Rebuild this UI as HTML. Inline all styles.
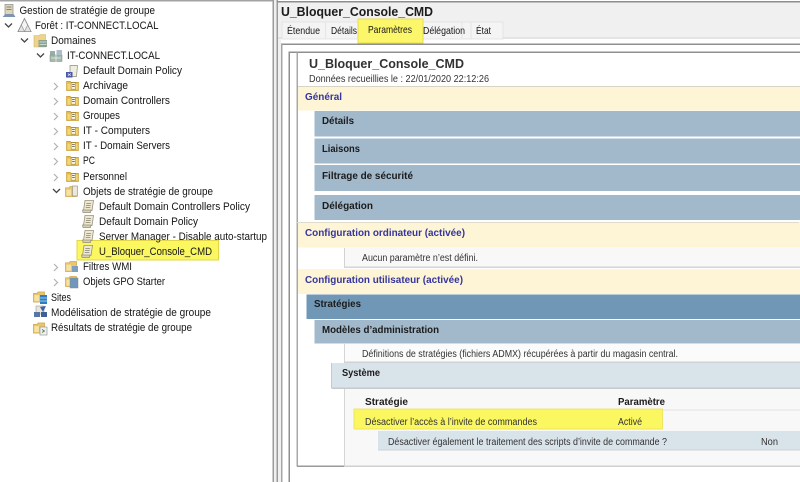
<!DOCTYPE html>
<html lang="fr"><head><meta charset="utf-8"><title>Gestion de stratégie de groupe</title>
<style>
html,body{margin:0;padding:0;background:#fff;width:800px;height:482px;overflow:hidden}
svg{display:block}
text{font-family:"Liberation Sans",sans-serif;font-size:11px;fill:#151515;white-space:pre}
.t text{filter:url(#b)}
.b{font-weight:bold;fill:#1a1a1a}
.h{font-weight:bold;fill:#35359f}
.g{fill:#333}
</style></head><body>
<svg width="800" height="482" viewBox="0 0 800 482" xmlns="http://www.w3.org/2000/svg">
<defs>
<filter id="b" x="-5%" y="-30%" width="110%" height="160%"><feGaussianBlur stdDeviation="0.25"/></filter>
<symbol id="ou" viewBox="0 0 14 12" overflow="visible"><path d="M.5 1.500h4l1 1h8v9H.5z" fill="#e6bd4c" stroke="#c59c34" stroke-width=".7"/><path d="M1.500 4h11v6.500h-11z" fill="#f3d676"/><rect x="5.500" y="3" width="5" height="7" fill="#fbf6e0" stroke="#8a7a50" stroke-width=".6"/><path d="M6.500 5h3M6.500 7h3" stroke="#5d5338" stroke-width=".8"/></symbol>
<symbol id="gpo" viewBox="0 0 12 13" overflow="visible"><path d="M3 .5h8.500L10 10.500H1.500z" fill="#efe9d4" stroke="#96907a" stroke-width=".8"/><path d="M.5 10h8.500l-.5 2.500H1z" fill="#d6cfb2" stroke="#96907a" stroke-width=".7"/><path d="M4.300 3.500h4.700M4 5.500h4.700M3.700 7.500h4.700" stroke="#85836f" stroke-width=".8"/></symbol>
<symbol id="ofold" viewBox="0 0 13 12" overflow="visible"><path d="M.5 2h4l1-1.500h7v11H.5z" fill="#e9c66b" stroke="#c9a244" stroke-width=".7"/><path d="M1.500 4h5v6.500h-5z" fill="#f6e3a4"/></symbol>
</defs>

<!-- left pane -->
<rect x="0" y="0" width="800" height="482" fill="#fff"/>
<rect x="0" y="0" width="273" height="1.500" fill="#a4a4a4"/>
<rect x="272.500" y="0" width="1.500" height="482" fill="#9b9b9b"/>
<rect x="274" y="0" width="3" height="482" fill="#f0f0f0"/>
<rect x="276.500" y="0" width="1.500" height="482" fill="#9b9b9b"/>
<rect x="278" y="2" width="522" height="480" fill="#f0f0f0"/>
<rect x="277" y="1" width="523" height="1.500" fill="#8e8e8e"/>
<rect x="278" y="37" width="522" height="2" fill="#e4e4e4"/>
<rect x="281" y="39" width="519" height="443" fill="#fff"/>
<rect x="281" y="43.500" width="519" height="1.500" fill="#8f8f8f"/>
<rect x="281" y="44" width="1.500" height="438" fill="#a5a5a5"/>
<rect x="288.500" y="51.500" width="511.500" height="1.500" fill="#8f8f8f"/>
<rect x="288.500" y="52" width="1.500" height="430" fill="#8f8f8f"/>
<rect x="296.500" y="52.500" width="1.500" height="414" fill="#a8a8a8"/>

<!-- tabs -->
<rect x="282" y="22" width="221" height="17" fill="#f4f4f4" stroke="#e0e0e0" stroke-width=".8"/>
<path d="M325.500 22v17M462 22v17M471 22v17" stroke="#e2e2e2" stroke-width=".8"/>
<rect x="358" y="19" width="65" height="24" fill="#fbf66a" stroke="#e8dc52" stroke-width="1"/>

<!-- report rows -->
<rect x="298" y="86" width="502" height="1.500" fill="#d8d4c4"/>
<rect x="298" y="87" width="502" height="23.500" fill="#fdf5d6"/>
<rect x="314.500" y="111" width="485.500" height="25.500" fill="#a2b9cc"/>
<rect x="314.500" y="138.500" width="485.500" height="25" fill="#a2b9cc"/>
<rect x="314.500" y="165" width="485.500" height="26" fill="#a2b9cc"/>
<rect x="314.500" y="195" width="485.500" height="25" fill="#a2b9cc"/>
<rect x="298" y="222.500" width="502" height="25" fill="#fdf5d6"/>
<rect x="297" y="222" width="502" height="1" fill="#e0dccb"/>
<rect x="344" y="248" width="456" height="19" fill="#f8f8f8"/>
<rect x="344" y="248" width="1" height="19" fill="#d2d2d2"/>
<rect x="344" y="266.500" width="456" height="1.500" fill="#d5d5d5"/>
<rect x="298" y="269" width="502" height="25" fill="#fdf5d6"/>
<rect x="306.500" y="294.500" width="493.500" height="24.500" fill="#7197b6"/>
<rect x="314.500" y="320" width="485.500" height="23.500" fill="#a2b9cc"/>
<rect x="344" y="344" width="456" height="18" fill="#fbfbfb"/>
<rect x="344" y="344" width="1" height="19" fill="#d5d5d5"/>
<rect x="344" y="361.500" width="456" height="1.500" fill="#cfd3d6"/>
<rect x="331.500" y="363" width="468.500" height="25.500" fill="#d9e3ea"/>
<rect x="331.500" y="387.500" width="468.500" height="1.500" fill="#c4cacd"/>
<rect x="331" y="363" width="1" height="25" fill="#c4cacd"/>
<rect x="344" y="389" width="456" height="77" fill="#f8f8f8"/>
<rect x="344" y="389" width="1" height="78" fill="#d5d5d5"/>
<rect x="355" y="409.500" width="445" height="1" fill="#e2e2e2"/>
<rect x="354" y="409" width="308.500" height="20" fill="#fbf760" stroke="#ecdf58" stroke-width=".8"/>
<rect x="378" y="431" width="422" height="19" fill="#d9e3ea"/>
<rect x="378" y="449.500" width="422" height="1" fill="#cfd3d6"/>
<rect x="297" y="465.500" width="503" height="1.500" fill="#d0d0d0"/>
<rect x="297" y="465.500" width="47" height="1.500" fill="#9a9a9a"/>

<!-- tree highlight -->
<rect x="77" y="240.500" width="141.500" height="19.500" fill="#fbf760" stroke="#e2d648" stroke-width="1"/>

<!-- expanders -->
<g fill="none" stroke="#444" stroke-width="1.300">
<path d="M5 23.500l3.500 3.500L12 23.500"/><path d="M21 38.500l3.500 3.500L28 38.500"/><path d="M37 53.500l3.500 3.500L44 53.500"/><path d="M53 189l3.500 3.500L60 189"/>
</g>
<g fill="none" stroke="#b2b2b2" stroke-width="1.200">
<path d="M54 83l3.500 3.500L54 90"/><path d="M54 98l3.500 3.500L54 105"/><path d="M54 113l3.500 3.500L54 120"/><path d="M54 128l3.500 3.500L54 135"/><path d="M54 143l3.500 3.500L54 150"/><path d="M54 158l3.500 3.500L54 165"/><path d="M54 174l3.500 3.500L54 181"/><path d="M54 264l3.500 3.500L54 271"/><path d="M54 279l3.500 3.500L54 286"/>
</g>

<!-- tree icons -->
<g>
<rect x="5" y="4.500" width="8" height="10" fill="#ddd6ba" stroke="#8a8a80" stroke-width=".7"/><path d="M2.500 17l3-3h8l2 3z" fill="#7d94b0"/><path d="M6.500 7h5M6.500 9.500h5" stroke="#667" stroke-width=".8"/>
<path d="M24.500 18.500l-6.500 13h13z" fill="#f4f4f4" stroke="#8f8f8f" stroke-width=".9"/><path d="M21.300 25l-3 6.500h6.200zM27.700 25l-3.200 6.500h6.500z" fill="#e4e4e4" stroke="#8f8f8f" stroke-width=".6"/>
<path d="M34 35.500h5l1.500-1h5v12.500H34z" fill="#eed48a" stroke="#d4b56c" stroke-width=".6"/><rect x="38.500" y="40" width="8.500" height="7" fill="#8aa391"/><path d="M39.500 42h7M39.500 44.500h7" stroke="#e3e8e3" stroke-width=".8"/>
<rect x="50" y="51" width="5" height="4" fill="#98ada5"/><rect x="50" y="55" width="12" height="6.500" fill="#a2b8ab" stroke="#7b9288" stroke-width=".5"/><rect x="56.500" y="50" width="5.500" height="5" fill="#adbdca"/><path d="M51 58h10M56 55v6.500" stroke="#edf0ed" stroke-width=".8"/>
<path d="M70 65.500h7.500l-1 11h-6.500z" fill="#efedE0" stroke="#8e8c7e" stroke-width=".7"/><rect x="66" y="72" width="6.500" height="5.500" fill="#4a5aa6"/><path d="M67.800 73.500l3 2.300M70.800 73.500l-3 2.300" stroke="#fff" stroke-width=".6"/>
<use href="#ou" x="66" y="80" width="13" height="11"/>
<use href="#ou" x="66" y="95" width="13" height="11"/>
<use href="#ou" x="66" y="110" width="13" height="11"/>
<use href="#ou" x="66" y="125" width="13" height="11"/>
<use href="#ou" x="66" y="140" width="13" height="11"/>
<use href="#ou" x="66" y="155" width="13" height="11"/>
<use href="#ou" x="66" y="171" width="13" height="11"/>
<use href="#ofold" x="65" y="186" width="12" height="11"/><rect x="72.500" y="186" width="5" height="10" fill="#ece9dc" stroke="#8b8b80" stroke-width=".6"/>
<use href="#gpo" x="82" y="200" width="12" height="13"/>
<use href="#gpo" x="82" y="215" width="12" height="13"/>
<use href="#gpo" x="82" y="230" width="12" height="13"/>
<use href="#gpo" x="81" y="245" width="12" height="13"/>
<use href="#ofold" x="65" y="261" width="12" height="11"/><rect x="72" y="266" width="6" height="6" fill="#7f9fc0"/>
<use href="#ofold" x="65" y="276" width="12" height="11"/><rect x="70" y="278" width="8" height="10" fill="#7096bd" stroke="#8b8b80" stroke-width=".5"/>
<use href="#ofold" x="33" y="291" width="12" height="12"/><rect x="40" y="295" width="7" height="9" fill="#2a7fc4"/><path d="M40 298h7M40 301h7" stroke="#cde" stroke-width=".7"/>
<rect x="36" y="306" width="8" height="8" fill="#e8e6dc" stroke="#8a8a80" stroke-width=".5"/><rect x="34" y="312" width="6" height="5" fill="#5476a8"/><rect x="41" y="312" width="6" height="5" fill="#3f5f96"/><path d="M40 307l6-1-3 6z" fill="#3a64a8"/>
<use href="#ofold" x="33" y="322" width="12" height="12"/><rect x="40" y="327" width="7" height="8" fill="#f1f1f1" stroke="#8a8a8a" stroke-width=".6"/><path d="M42 329.500l2.500 1.500-2.500 1.500" stroke="#3a7a4a" fill="none" stroke-width=".8"/>
</g>

<!-- text -->
<g class="t">
<text x="19.500" y="14" textLength="135.500" lengthAdjust="spacingAndGlyphs">Gestion de stratégie de groupe</text>
<text x="35" y="29" textLength="123.500" lengthAdjust="spacingAndGlyphs">Forêt : IT-CONNECT.LOCAL</text>
<text x="51" y="44" textLength="45" lengthAdjust="spacingAndGlyphs">Domaines</text>
<text x="67" y="59" textLength="93" lengthAdjust="spacingAndGlyphs">IT-CONNECT.LOCAL</text>
<text x="83" y="74" textLength="99" lengthAdjust="spacingAndGlyphs">Default Domain Policy</text>
<text x="83" y="89" textLength="45" lengthAdjust="spacingAndGlyphs">Archivage</text>
<text x="83" y="104" textLength="87" lengthAdjust="spacingAndGlyphs">Domain Controllers</text>
<text x="83" y="119" textLength="37" lengthAdjust="spacingAndGlyphs">Groupes</text>
<text x="83" y="134" textLength="67" lengthAdjust="spacingAndGlyphs">IT - Computers</text>
<text x="83" y="149" textLength="87" lengthAdjust="spacingAndGlyphs">IT - Domain Servers</text>
<text x="83" y="164" textLength="12" lengthAdjust="spacingAndGlyphs">PC</text>
<text x="83" y="180" textLength="44" lengthAdjust="spacingAndGlyphs">Personnel</text>
<text x="83" y="195" textLength="130" lengthAdjust="spacingAndGlyphs">Objets de stratégie de groupe</text>
<text x="99" y="210" textLength="151" lengthAdjust="spacingAndGlyphs">Default Domain Controllers Policy</text>
<text x="99" y="225" textLength="99" lengthAdjust="spacingAndGlyphs">Default Domain Policy</text>
<text x="99" y="240" textLength="168" lengthAdjust="spacingAndGlyphs">Server Manager - Disable auto-startup</text>
<text x="99" y="255" textLength="113" lengthAdjust="spacingAndGlyphs">U_Bloquer_Console_CMD</text>
<text x="83" y="270" textLength="49" lengthAdjust="spacingAndGlyphs">Filtres WMI</text>
<text x="83" y="285" textLength="82" lengthAdjust="spacingAndGlyphs">Objets GPO Starter</text>
<text x="51" y="301" textLength="20" lengthAdjust="spacingAndGlyphs">Sites</text>
<text x="51" y="316" textLength="160" lengthAdjust="spacingAndGlyphs">Modélisation de stratégie de groupe</text>
<text x="51" y="331" textLength="141" lengthAdjust="spacingAndGlyphs">Résultats de stratégie de groupe</text>

<text x="281" y="16" class="b" style="font-size:13px" textLength="152" lengthAdjust="spacingAndGlyphs">U_Bloquer_Console_CMD</text>
<text x="287" y="34" style="font-size:10.500px" textLength="33" lengthAdjust="spacingAndGlyphs">Étendue</text>
<text x="331" y="34" style="font-size:10.500px" textLength="26" lengthAdjust="spacingAndGlyphs">Détails</text>
<text x="368" y="33" style="font-size:10.500px" textLength="44" lengthAdjust="spacingAndGlyphs">Paramètres</text>
<text x="423" y="34" style="font-size:10.500px" textLength="42" lengthAdjust="spacingAndGlyphs">Délégation</text>
<text x="476" y="34" style="font-size:10.500px" textLength="15" lengthAdjust="spacingAndGlyphs">État</text>

<text x="309" y="68" class="g" style="font-size:13px;font-weight:bold" textLength="155" lengthAdjust="spacingAndGlyphs">U_Bloquer_Console_CMD</text>
<text x="309" y="82" class="g" style="font-size:10px" textLength="180" lengthAdjust="spacingAndGlyphs">Données recueillies le : 22/01/2020 22:12:26</text>
<text x="305" y="100" class="h" style="font-size:10px" textLength="37" lengthAdjust="spacingAndGlyphs">Général</text>
<text x="322" y="124" class="b" style="font-size:10px" textLength="32" lengthAdjust="spacingAndGlyphs">Détails</text>
<text x="322" y="152" class="b" style="font-size:10px" textLength="38" lengthAdjust="spacingAndGlyphs">Liaisons</text>
<text x="322" y="179" class="b" style="font-size:10px" textLength="91" lengthAdjust="spacingAndGlyphs">Filtrage de sécurité</text>
<text x="322" y="209" class="b" style="font-size:10px" textLength="51" lengthAdjust="spacingAndGlyphs">Délégation</text>
<text x="305" y="236" class="h" style="font-size:10px" textLength="160" lengthAdjust="spacingAndGlyphs">Configuration ordinateur (activée)</text>
<text x="362" y="261" class="g" style="font-size:10px" textLength="116" lengthAdjust="spacingAndGlyphs">Aucun paramètre n’est défini.</text>
<text x="305" y="283" class="h" style="font-size:10px" textLength="158" lengthAdjust="spacingAndGlyphs">Configuration utilisateur (activée)</text>
<text x="314" y="307" class="b" style="font-size:10px" textLength="47" lengthAdjust="spacingAndGlyphs">Stratégies</text>
<text x="322" y="333" class="b" style="font-size:10px" textLength="117" lengthAdjust="spacingAndGlyphs">Modèles d’administration</text>
<text x="362" y="357" class="g" style="font-size:10px" textLength="316" lengthAdjust="spacingAndGlyphs">Définitions de stratégies (fichiers ADMX) récupérées à partir du magasin central.</text>
<text x="342" y="376" class="b" style="font-size:10px" textLength="38" lengthAdjust="spacingAndGlyphs">Système</text>
<text x="365" y="405" class="b" style="font-size:10px" textLength="43" lengthAdjust="spacingAndGlyphs">Stratégie</text>
<text x="618" y="405" class="b" style="font-size:10px" textLength="47" lengthAdjust="spacingAndGlyphs">Paramètre</text>
<text x="365" y="425" class="g" style="font-size:10px" textLength="172" lengthAdjust="spacingAndGlyphs">Désactiver l’accès à l’invite de commandes</text>
<text x="618" y="425" class="g" style="font-size:10px" textLength="24" lengthAdjust="spacingAndGlyphs">Activé</text>
<text x="388" y="445" class="g" style="font-size:10px" textLength="279" lengthAdjust="spacingAndGlyphs">Désactiver également le traitement des scripts d’invite de commande ?</text>
<text x="761" y="445" class="g" style="font-size:10px" textLength="17" lengthAdjust="spacingAndGlyphs">Non</text>
</g>
</svg>
</body></html>
